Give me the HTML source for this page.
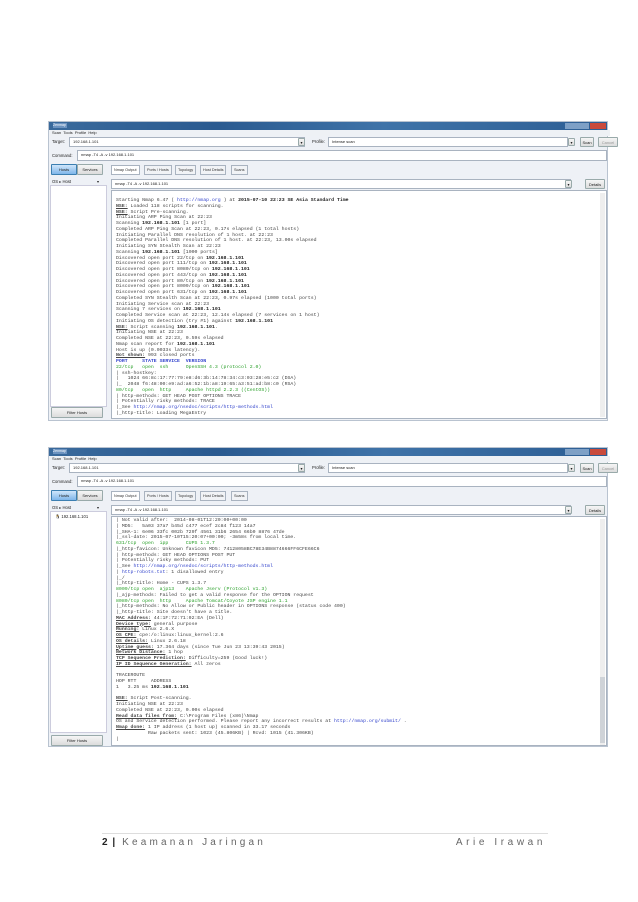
<!DOCTYPE html>
<html><head><meta charset="utf-8"><style>
body{margin:0;width:638px;height:902px;background:#fff;position:relative;overflow:hidden;font-family:"Liberation Sans",sans-serif}
.win{position:absolute;left:48px;width:560px;height:300px;background:#eef1f6;border:1px solid #b9c3d0;box-sizing:border-box}
.a{position:absolute}
.tb{left:0;top:0;width:100%;height:8px;background:linear-gradient(90deg,#3a6a9c,#2a5a90 30%,#3f73a8 60%,#2d5e94)}
.menu{left:0;top:8px;width:100%;height:6px;background:#eef1f5;font-size:4px;line-height:6px;color:#222;padding-left:3px}
.lbl{font-size:4.2px;color:#222;line-height:5px}
.inp{background:#fff;border:1px solid #a9b3c0;box-sizing:border-box;font-size:4px;line-height:8px;padding-left:3px;color:#222}
.btn{background:linear-gradient(#f5f5f5,#dcdcdc);border:1px solid #9aa;box-sizing:border-box;font-size:4px;text-align:center;line-height:9px;color:#222;border-radius:1px}
.out{background:#fff;border:1px solid #a9b3c0;box-sizing:border-box}
pre{margin:0;font-family:"Liberation Mono",monospace;font-size:4.85px;line-height:5.75px;color:#444}
b{color:#222}
.g{color:#2aa02a}.bl{color:#3344cc}.u{text-decoration:underline;font-weight:bold}
.tab{position:absolute;top:0;height:10px;border:1px solid #a9b3c0;box-sizing:border-box;font-size:3.8px;line-height:9px;padding:0 2px;background:#f1f3f6;color:#333}
</style></head><body>

<!-- window 1 -->
<div class="win" style="top:121px">
 <div class="a tb"><div class="a" style="left:4px;top:1px;width:14px;height:5px;background:#6c93c0;font-size:3.5px;color:#fff;line-height:5px">Zenmap</div><div class="a" style="right:1px;top:1px;width:16px;height:6px;background:#c94a3c"></div><div class="a" style="right:18px;top:1px;width:24px;height:6px;background:#7ea0c6"></div></div>
 <div class="a menu">Scan&nbsp; Tools&nbsp; Profile&nbsp; Help</div>
 <div class="a lbl" style="left:3px;top:17px">Target:</div>
 <div class="a inp" style="left:20px;top:15px;width:236px;height:10px">192.168.1.101</div>
 <div class="a btn" style="left:249px;top:16px;width:7px;height:8px;line-height:7px">▾</div>
 <div class="a lbl" style="left:263px;top:17px">Profile:</div>
 <div class="a inp" style="left:279px;top:15px;width:240px;height:10px">Intense scan</div>
 <div class="a btn" style="left:519px;top:16px;width:7px;height:8px;line-height:7px">▾</div>
 <div class="a btn" style="left:531px;top:15px;width:14px;height:10px">Scan</div>
 <div class="a btn" style="left:549px;top:15px;width:20px;height:10px;color:#999">Cancel</div>
 <div class="a lbl" style="left:3px;top:31px">Command:</div>
 <div class="a inp" style="left:28px;top:28px;width:530px;height:11px">nmap -T4 -A -v 192.168.1.101</div>
 <div class="a btn" style="left:2px;top:42px;width:26px;height:11px;background:linear-gradient(#cfe6fb,#7fb6ea);border-color:#3c7fb1">Hosts</div>
 <div class="a btn" style="left:28px;top:42px;width:26px;height:11px">Services</div>
 <div class="a" style="left:62px;top:43px;width:200px;height:10px">
  <div class="tab" style="left:0;background:#fff">Nmap Output</div><div class="tab" style="left:33px">Ports / Hosts</div><div class="tab" style="left:64px">Topology</div><div class="tab" style="left:89px">Host Details</div><div class="tab" style="left:120px">Scans</div>
 </div>
 <div class="a lbl" style="left:3px;top:57px">OS ▸ Host</div><div class="a lbl" style="left:48px;top:57px">▾</div>
 <div class="a" style="left:1px;top:63px;width:55px;height:220px;background:#fff;border:1px solid #ccd"></div>
 <div class="a btn" style="left:2px;top:285px;width:52px;height:11px">Filter Hosts</div>
 <div class="a inp" style="left:62px;top:57px;width:460px;height:10px">nmap -T4 -A -v 192.168.1.101</div>
 <div class="a btn" style="left:516px;top:58px;width:7px;height:8px;line-height:7px">▾</div>
 <div class="a btn" style="left:536px;top:57px;width:20px;height:10px">Details</div>
 <div class="a out" style="left:62px;top:68px;width:496px;height:229px">
  <div class="a" style="right:1px;top:2px;width:5px;height:224px;background:#eee"></div>
<pre style="padding:7px 0 0 4px">Starting Nmap 6.47 ( <span class="bl">http://nmap.org</span> ) at <b>2015-07-10 22:23 SE Asia Standard Time</b>
<span class="u">NSE:</span> Loaded 118 scripts for scanning.
<span class="u">NSE:</span> Script Pre-scanning.
Initiating ARP Ping Scan at 22:23
Scanning <b>192.168.1.101</b> [1 port]
Completed ARP Ping Scan at 22:23, 0.17s elapsed (1 total hosts)
Initiating Parallel DNS resolution of 1 host. at 22:23
Completed Parallel DNS resolution of 1 host. at 22:23, 13.00s elapsed
Initiating SYN Stealth Scan at 22:23
Scanning <b>192.168.1.101</b> [1000 ports]
Discovered open port 22/tcp on <b>192.168.1.101</b>
Discovered open port 111/tcp on <b>192.168.1.101</b>
Discovered open port 8080/tcp on <b>192.168.1.101</b>
Discovered open port 443/tcp on <b>192.168.1.101</b>
Discovered open port 80/tcp on <b>192.168.1.101</b>
Discovered open port 8009/tcp on <b>192.168.1.101</b>
Discovered open port 631/tcp on <b>192.168.1.101</b>
Completed SYN Stealth Scan at 22:23, 0.97s elapsed (1000 total ports)
Initiating Service scan at 22:23
Scanning 7 services on <b>192.168.1.101</b>
Completed Service scan at 22:23, 12.14s elapsed (7 services on 1 host)
Initiating OS detection (try #1) against <b>192.168.1.101</b>
<span class="u">NSE:</span> Script scanning <b>192.168.1.101</b>.
Initiating NSE at 22:23
Completed NSE at 22:23, 0.59s elapsed
Nmap scan report for <b>192.168.1.101</b>
Host is up (0.0033s latency).
<span class="u">Not shown:</span> 993 closed ports
<b class="bl">PORT     STATE SERVICE  VERSION</b>
<span class="g">22/tcp   open  ssh      OpenSSH 4.3 (protocol 2.0)</span>
| ssh-hostkey:
|   1024 66:8c:17:77:79:e8:d6:3b:14:78:34:c3:03:28:e5:c2 (DSA)
|_  2048 f6:48:00:e9:ad:a6:52:1b:a8:19:65:a3:51:ad:b8:c0 (RSA)
<span class="g">80/tcp   open  http     Apache httpd 2.2.3 ((CentOS))</span>
| http-methods: GET HEAD POST OPTIONS TRACE
| Potentially risky methods: TRACE
|_See <span class="bl">http://nmap.org/nsedoc/scripts/http-methods.html</span>
|_http-title: Loading MegaEntry</pre>
 </div>
</div>

<!-- window 2 -->
<div class="win" style="top:447px">
 <div class="a tb"><div class="a" style="left:4px;top:1px;width:14px;height:5px;background:#6c93c0;font-size:3.5px;color:#fff;line-height:5px">Zenmap</div><div class="a" style="right:1px;top:1px;width:16px;height:6px;background:#c94a3c"></div><div class="a" style="right:18px;top:1px;width:24px;height:6px;background:#7ea0c6"></div></div>
 <div class="a menu">Scan&nbsp; Tools&nbsp; Profile&nbsp; Help</div>
 <div class="a lbl" style="left:3px;top:17px">Target:</div>
 <div class="a inp" style="left:20px;top:15px;width:236px;height:10px">192.168.1.101</div>
 <div class="a btn" style="left:249px;top:16px;width:7px;height:8px;line-height:7px">▾</div>
 <div class="a lbl" style="left:263px;top:17px">Profile:</div>
 <div class="a inp" style="left:279px;top:15px;width:240px;height:10px">Intense scan</div>
 <div class="a btn" style="left:519px;top:16px;width:7px;height:8px;line-height:7px">▾</div>
 <div class="a btn" style="left:531px;top:15px;width:14px;height:10px">Scan</div>
 <div class="a btn" style="left:549px;top:15px;width:20px;height:10px;color:#999">Cancel</div>
 <div class="a lbl" style="left:3px;top:31px">Command:</div>
 <div class="a inp" style="left:28px;top:28px;width:530px;height:11px">nmap -T4 -A -v 192.168.1.101</div>
 <div class="a btn" style="left:2px;top:42px;width:26px;height:11px;background:linear-gradient(#cfe6fb,#7fb6ea);border-color:#3c7fb1">Hosts</div>
 <div class="a btn" style="left:28px;top:42px;width:26px;height:11px">Services</div>
 <div class="a" style="left:62px;top:43px;width:200px;height:10px">
  <div class="tab" style="left:0;background:#fff">Nmap Output</div><div class="tab" style="left:33px">Ports / Hosts</div><div class="tab" style="left:64px">Topology</div><div class="tab" style="left:89px">Host Details</div><div class="tab" style="left:120px">Scans</div>
 </div>
 <div class="a lbl" style="left:3px;top:57px">OS ▸ Host</div><div class="a lbl" style="left:48px;top:57px">▾</div>
 <div class="a" style="left:1px;top:63px;width:55px;height:220px;background:#fff;border:1px solid #ccd"></div>
 <div class="a lbl" style="left:6px;top:66px">🐧 192.168.1.101</div>
 <div class="a btn" style="left:2px;top:287px;width:52px;height:11px">Filter Hosts</div>
 <div class="a inp" style="left:62px;top:57px;width:460px;height:10px">nmap -T4 -A -v 192.168.1.101</div>
 <div class="a btn" style="left:516px;top:58px;width:7px;height:8px;line-height:7px">▾</div>
 <div class="a btn" style="left:536px;top:57px;width:20px;height:10px">Details</div>
 <div class="a out" style="left:62px;top:68px;width:496px;height:230px">
  <div class="a" style="right:1px;top:2px;width:5px;height:226px;background:#eee"></div>
  <div class="a" style="right:1px;top:160px;width:5px;height:66px;background:#cfd3d8"></div>
<pre style="padding:1px 0 0 4px">| Not valid after:  2014-08-01T12:20:00+00:00
| MD5:   5a03 37a7 b45d c477 ecef 2c84 f123 14a7
|_SHA-1: 6e06 33fc 002b 729f 4561 31b6 2654 66b0 8876 47de
|_ssl-date: 2015-07-10T15:20:07+00:00; -3m58s from local time.
<span class="g">631/tcp  open  ipp      CUPS 1.3.7</span>
|_http-favicon: Unknown favicon MD5: 74128058BC78E34B8874666FF6CFE66C6
| http-methods: GET HEAD OPTIONS POST PUT
| Potentially risky methods: PUT
|_See <span class="bl">http://nmap.org/nsedoc/scripts/http-methods.html</span>
| <span class="bl">http-robots.txt</span>: 1 disallowed entry
|_/
|_http-title: Home - CUPS 1.3.7
<span class="g">8009/tcp open  ajp13    Apache Jserv (Protocol v1.3)</span>
|_ajp-methods: Failed to get a valid response for the OPTION request
<span class="g">8080/tcp open  http     Apache Tomcat/Coyote JSP engine 1.1</span>
|_http-methods: No Allow or Public header in OPTIONS response (status code 400)
|_http-title: Site doesn't have a title.
<span class="u">MAC Address:</span> 44:1F:72:71:02:EA (Dell)
<span class="u">Device type:</span> general purpose
<span class="u">Running:</span> Linux 2.6.X
<span class="u">OS CPE:</span> cpe:/o:linux:linux_kernel:2.6
<span class="u">OS details:</span> Linux 2.6.18
<span class="u">Uptime guess:</span> 17.364 days (since Tue Jun 23 13:39:43 2015)
<span class="u">Network Distance:</span> 1 hop
<span class="u">TCP Sequence Prediction:</span> Difficulty=259 (Good luck!)
<span class="u">IP ID Sequence Generation:</span> All zeros

TRACEROUTE
HOP RTT     ADDRESS
1   3.25 ms <b>192.168.1.101</b>

<span class="u">NSE:</span> Script Post-scanning.
Initiating NSE at 22:23
Completed NSE at 22:23, 0.00s elapsed
<span class="u">Read data files from:</span> C:\Program Files (x86)\Nmap
OS and Service detection performed. Please report any incorrect results at <span class="bl">http://nmap.org/submit/</span> .
<span class="u">Nmap done:</span> 1 IP address (1 host up) scanned in 33.17 seconds
           Raw packets sent: 1023 (45.806KB) | Rcvd: 1015 (41.306KB)
|</pre>
 </div>
</div>

<!-- footer -->
<div class="a" style="left:102px;top:833px;width:446px;height:1px;background:#ddd"></div>
<div class="a" style="left:102px;top:837px;font-size:10px;color:#666;letter-spacing:3.2px;white-space:nowrap"><b style="color:#222;letter-spacing:1px">2 |</b> Keamanan Jaringan</div>
<div class="a" style="right:92px;top:837px;font-size:10px;color:#666;letter-spacing:3.6px;white-space:nowrap">Arie Irawan</div>
</body></html>
